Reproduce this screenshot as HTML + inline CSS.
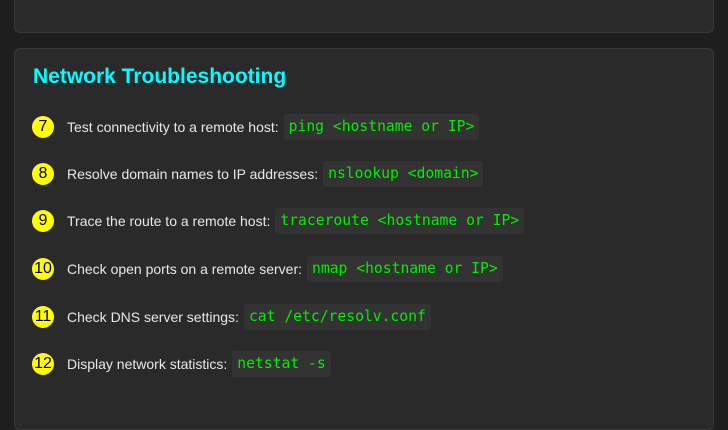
<!DOCTYPE html>
<html><head><style>
body{margin:0;background:#1e1e1e;width:728px;height:410px;overflow:hidden;font-family:"Liberation Sans",Arial,sans-serif;position:relative}
.card{position:absolute;left:14px;width:698px;background:#2a2a2a;border:1px solid #383838;border-radius:6px}
h2{position:absolute;left:18px;top:16px;margin:0;color:#00ffff;font-size:21px;font-weight:bold}
.row{position:absolute;left:17px;height:26px;display:flex;align-items:center;color:#e8e8e8;font-size:14px}
.n{width:22px;height:22px;border-radius:50%;background:#ffff00;color:#000;font-size:16px;display:flex;align-items:center;justify-content:center;margin-right:13px}
code{background:#333;color:#00ee00;font-family:"DejaVu Sans Mono","Liberation Mono",monospace;font-size:14.7px;padding:4px 5px;border-radius:3px;margin-left:5px;height:18px;line-height:18px}
</style></head><body>
<div class="card" style="top:-10px;height:41px"></div>
<div class="card" style="top:48px;height:380px">
<h2>Network Troubleshooting</h2>
<div class="row" style="top:65px"><span class="n">7</span>Test connectivity to a remote host:<code>ping &lt;hostname or IP&gt;</code></div>
<div class="row" style="top:112px"><span class="n">8</span>Resolve domain names to IP addresses:<code>nslookup &lt;domain&gt;</code></div>
<div class="row" style="top:159px"><span class="n">9</span>Trace the route to a remote host:<code>traceroute &lt;hostname or IP&gt;</code></div>
<div class="row" style="top:207px"><span class="n">10</span>Check open ports on a remote server:<code>nmap &lt;hostname or IP&gt;</code></div>
<div class="row" style="top:255px"><span class="n">11</span>Check DNS server settings:<code>cat /etc/resolv.conf</code></div>
<div class="row" style="top:302px"><span class="n">12</span>Display network statistics:<code>netstat -s</code></div>
</div>
</body></html>
